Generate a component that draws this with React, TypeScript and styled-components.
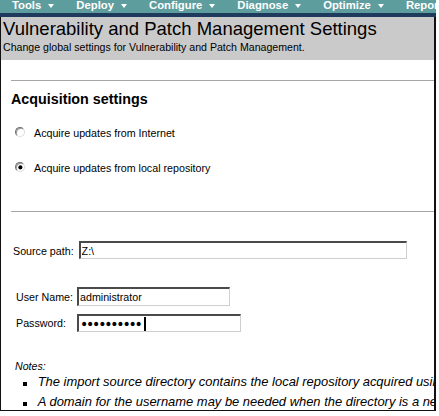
import React, { ReactElement } from 'react';
import styled, { createGlobalStyle } from 'styled-components';

const GlobalStyle = createGlobalStyle`
	html, body {
		margin: 0;
		padding: 0;
		background: #ffffff;
	}
	body {
		font-family: 'Liberation Sans', Arial, sans-serif;
		color: #000;
	}
`;

const MENU = ['Tools', 'Deploy', 'Configure', 'Diagnose', 'Optimize', 'Reports'];

const NOTES = [
	'The import source directory contains the local repository acquired using the Vulnerability and Patch Management tool.',
	'A domain for the username may be needed when the directory is a network share.',
];

export default function App(): ReactElement {
	return (
		<>
			<GlobalStyle />
			<StyledPage>
				<StyledMenuBar>
					{MENU.map((item) => (
						<StyledMenuItem key={item}>
							{item}
							<StyledCaretDown />
						</StyledMenuItem>
					))}
				</StyledMenuBar>
				<StyledFrame>
					<StyledHeader>
						<StyledTitle>Vulnerability and Patch Management Settings</StyledTitle>
						<StyledSubtitle>Change global settings for Vulnerability and Patch Management.</StyledSubtitle>
					</StyledHeader>

					<StyledRule top={20} />
					<StyledSectionTitle>Acquisition settings</StyledSectionTitle>

					<StyledRadioRow top={18}>
						<StyledRadio type="radio" name="acq" readOnly />
						<span>Acquire updates from Internet</span>
					</StyledRadioRow>
					<StyledRadioRow top={21}>
						<StyledRadio type="radio" name="acq" defaultChecked readOnly />
						<span>Acquire updates from local repository</span>
					</StyledRadioRow>

					<StyledRule top={36} />

					<StyledSourceRow>
						<StyledLabel>Source path:</StyledLabel>
						<StyledInput w={328} h={18} defaultValue="Z:\" readOnly />
					</StyledSourceRow>

					<StyledCredentials>
						<StyledLabel>User Name:</StyledLabel>
						<StyledInput w={153} h={19} defaultValue="administrator" readOnly />
						<StyledLabel>Password:</StyledLabel>
						<StyledSecretBox>
							<StyledDots>••••••••••</StyledDots>
							<StyledTextCaret />
						</StyledSecretBox>
					</StyledCredentials>

					<StyledNotesTitle>Notes:</StyledNotesTitle>
					<StyledNotes>
						{NOTES.map((note) => (
							<li key={note}>{note}</li>
						))}
					</StyledNotes>
				</StyledFrame>
			</StyledPage>
		</>
	);
}

const StyledPage = styled.div`
	width: 436px;
	overflow: hidden;
`;

const StyledMenuBar = styled.nav`
	display: flex;
	width: 435px;
	height: 13px;
	padding-left: 1px;
	background: #5e9d9e;
	border-bottom: 4px solid #1e3a5c;
	white-space: nowrap;
	overflow: hidden;
`;

const StyledMenuItem = styled.div`
	display: flex;
	align-items: flex-start;
	flex-shrink: 0;
	padding: 0 11px;
	font-size: 11.3px;
	font-weight: bold;
	line-height: 10px;
	color: #ffffff;
`;

const StyledCaretDown = styled.span`
	width: 0;
	height: 0;
	margin: 4px 0 0 7px;
	border-left: 3px solid transparent;
	border-right: 3px solid transparent;
	border-top: 4px solid #ffffff;
`;

const StyledFrame = styled.main`
	box-sizing: border-box;
	height: 394px;
	border-left: 1px solid #111;
	border-right: 2px solid #111;
	border-bottom: 1px solid #111;
	overflow: hidden;
	font-size: 10.7px;
`;

const StyledHeader = styled.header`
	box-sizing: border-box;
	height: 43px;
	padding: 2px 0 0 2px;
	background: #cacaca;
`;

const StyledTitle = styled.h1`
	margin: 0;
	font-size: 18.5px;
	font-weight: normal;
	line-height: 20px;
	white-space: nowrap;
`;

const StyledSubtitle = styled.p`
	margin: 2px 0 0;
	font-size: 10.6px;
	line-height: 13px;
	white-space: nowrap;
`;

const StyledRule = styled.hr<{ top: number }>`
	height: 1px;
	margin: ${({ top }): string => `${top}px`} 0 0 10px;
	border: 0;
	background: #a6a6a6;
`;

const StyledSectionTitle = styled.h2`
	margin: 10px 0 0 10px;
	font-size: 14.3px;
	font-weight: bold;
	line-height: 17px;
`;

const StyledRadioRow = styled.label<{ top: number }>`
	display: flex;
	align-items: flex-start;
	gap: 9px;
	margin: ${({ top }): string => `${top}px`} 0 0 14px;
	line-height: 14px;
	white-space: nowrap;
`;

const StyledRadio = styled.input`
	appearance: none;
	box-sizing: border-box;
	width: 10px;
	height: 10px;
	margin: 1px 0 0;
	border: 1px solid;
	border-color: #6e6e6e #dcdcdc #dcdcdc #6e6e6e;
	border-radius: 50%;
	background: #ffffff;
	box-shadow: inset 1px 1px 0 #9a9a9a;

	&:checked {
		background: radial-gradient(circle at 55% 55%, #000 0, #000 1.7px, #ffffff 2.4px);
	}
`;

const StyledLabel = styled.span`
	white-space: nowrap;
	line-height: 14px;
`;

const StyledSourceRow = styled.div`
	display: flex;
	align-items: baseline;
	gap: 5px;
	margin: 29px 0 0 12px;
`;

const StyledInput = styled.input<{ w: number; h: number }>`
	box-sizing: border-box;
	width: ${({ w }): string => `${w}px`};
	height: ${({ h }): string => `${h}px`};
	margin: 0;
	padding: 0 0 0 1px;
	border-style: solid;
	border-width: 2px 1px 1px 2px;
	border-color: #4a4a4a #cfcfcf #cfcfcf #4a4a4a;
	background: #ffffff;
	font-family: 'Liberation Sans', Arial, sans-serif;
	font-size: 10.7px;
	color: #000;
	outline: none;
`;

const StyledCredentials = styled.div`
	display: grid;
	grid-template-columns: 61px auto;
	justify-content: start;
	align-items: center;
	row-gap: 8px;
	margin: 28px 0 0 15px;
`;

const StyledSecretBox = styled.div`
	box-sizing: border-box;
	display: flex;
	align-items: center;
	width: 164px;
	height: 18px;
	padding-left: 1px;
	border-style: solid;
	border-width: 2px 1px 1px 2px;
	border-color: #4a4a4a #cfcfcf #cfcfcf #4a4a4a;
	background: #ffffff;
`;

const StyledDots = styled.span`
	font-family: 'DejaVu Sans', sans-serif;
	font-size: 14px;
	letter-spacing: -2.2px;
	line-height: 14px;
`;

const StyledTextCaret = styled.span`
	width: 2px;
	height: 14px;
	margin-left: 3px;
	background: #000;
`;

const StyledNotesTitle = styled.p`
	margin: 28px 0 0 14px;
	font-size: 10.6px;
	font-style: italic;
	line-height: 12px;
`;

const StyledNotes = styled.ul`
	margin: 0;
	padding: 0 0 0 22px;
	list-style: none;
	font-size: 12.95px;
	font-style: italic;
	line-height: 20px;
	white-space: nowrap;

	li::before {
		content: '';
		display: inline-block;
		width: 4px;
		height: 4px;
		margin-right: 10.7px;
		background: #000;
	}
`;
